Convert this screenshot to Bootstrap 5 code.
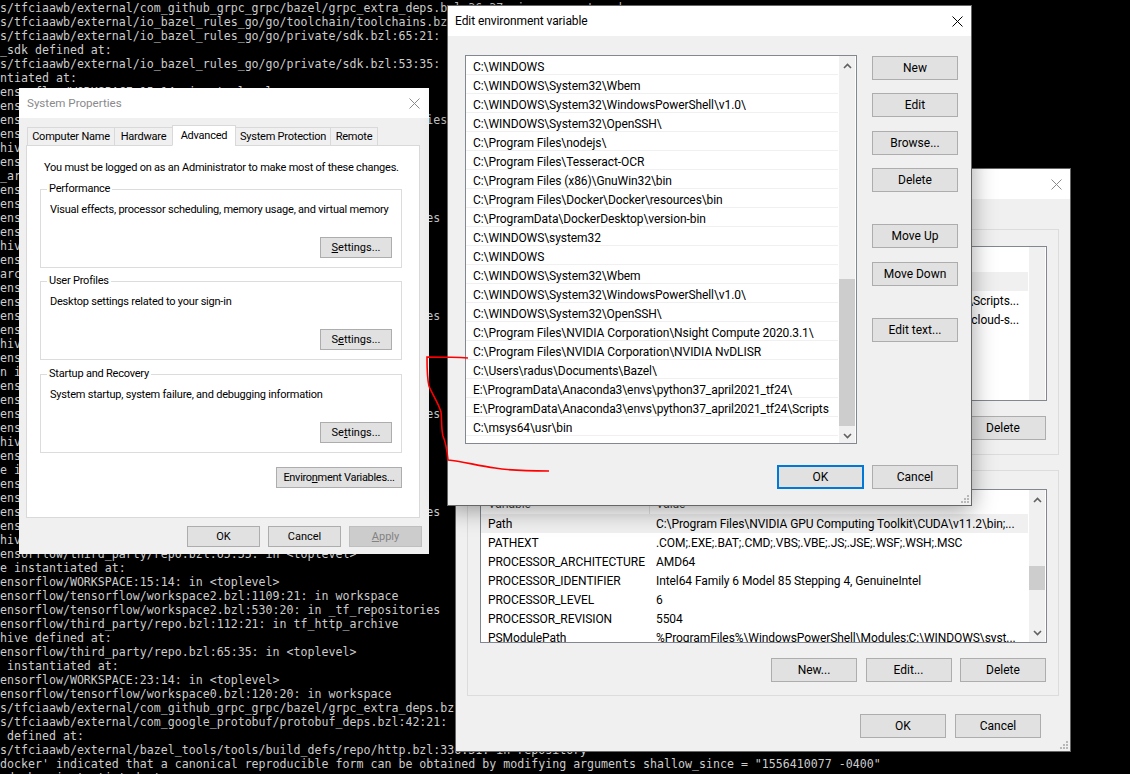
<!DOCTYPE html>
<html lang="en">
<head>
<meta charset="utf-8">
<title>Environment variables</title>
<link href="https://cdn.jsdelivr.net/npm/bootstrap@5.3.0/dist/css/bootstrap.min.css" rel="stylesheet">
<style>
html,body{margin:0;background:#000;overflow:hidden}
.desk{position:relative;width:1130px;height:774px;overflow:hidden;background:#000;font-family:Roboto,"Noto Sans",sans-serif;color:#000}
.term{margin:0;padding:1px 0 0;font:11.62px/14px "DejaVu Sans Mono",monospace;color:#ccc;white-space:pre;overflow:hidden;height:774px}
.win{position:absolute;background:#f0f0f0;display:flex;flex-direction:column}
.win-sys{left:19px;top:88px;width:410px;height:466px;font-size:11px;line-height:14px;letter-spacing:-.22px}
.win-path{left:447px;top:5px;width:525px;height:501px;border:1px solid #666;box-shadow:0 4px 22px rgba(0,0,0,.38);font-size:12px;line-height:14px;letter-spacing:-.08px;z-index:3}
.win-env{left:455px;top:168px;width:616px;height:584px;border:1px solid #666;font-size:12px;line-height:14px;letter-spacing:-.08px}
.ttl{height:30px;flex:none;background:#fff;display:flex;align-items:center;justify-content:space-between;padding:0 8px 0 7px}
.ttl-off{color:#8a8a8a;font-size:11.6px;letter-spacing:0}
.win-sys .ttl{padding:0 9px 0 8px}
.xico{display:block;width:11px;height:11px;fill:none;stroke:#000;stroke-width:1}
.ttl-off .xico{stroke:#8a8a8a}
.btn.wbtn{--bs-btn-padding-x:0;--bs-btn-padding-y:0;--bs-btn-font-size:inherit;--bs-btn-line-height:1;--bs-btn-border-radius:0;--bs-btn-border-width:1px;--bs-btn-bg:#e1e1e1;--bs-btn-border-color:#adadad;--bs-btn-color:#000;flex:none;display:flex;align-items:center;justify-content:center;width:86px;height:24px;background:#e1e1e1;border:1px solid #adadad;color:#000;white-space:nowrap}
.win-sys .btn.wbtn{width:73px;height:21px}
.win-sys .gact .btn.wbtn{width:72px}
.win-sys .btn.wide{width:126px;letter-spacing:-.3px}
.btn.wbtn.off{background:#ccc;border-color:#bfbfbf;color:#838383;opacity:1}
.btn.wbtn.okb{border:2px solid #0078d7;width:87px}
.tabrow{margin:7px 0 0 8px;align-items:flex-end;border:0;height:21px;flex:none;position:relative;z-index:1;flex-wrap:nowrap}
.tabrow .nav-link{display:flex;align-items:center;justify-content:center;padding:1px 0 0;height:19px;margin:0 0 0 -1px;border:1px solid #d9d9d9;border-radius:0;background:#f0f0f0;color:#000;white-space:nowrap}
.tabrow .nav-link.active{height:21px;padding:0;background:#fff;border-color:#d9d9d9 #d9d9d9 #fff;color:#000}
.t1{width:88px;margin-left:0!important}.t2{width:59px}.t3{width:64px}.t4{width:96px}.t5{width:48px}
.tabpane{margin:-1px 9px 0 7px;height:373px;flex:none;background:#fff;border:1px solid #d9d9d9;padding:15px 17px 0 13px}
.note{margin:0 0 0 4px;height:14px;white-space:nowrap}
.gbox{display:block;min-width:0;margin:7px 0 0;padding:0;border:1px solid #dcdcdc;height:86px}
.gbox.g2{margin-top:6px}
.gbox.g3{margin-top:7px}
.gbox legend{float:none;width:auto;margin:0 0 0 6px;padding:0 2px;font-size:inherit;line-height:14px}
.ginner{padding:7px 9px 0 9px}
.gline{height:14px;white-space:nowrap}
.gact{display:flex;justify-content:flex-end;margin-top:20px}
.envact{display:flex;justify-content:flex-end;margin-top:14px}
.sysfoot{display:flex;justify-content:flex-end;gap:8px;margin:8px 7px 0 0}
.pathmain{display:flex;margin:19px 0 0 17px;gap:15px}
.lbox{display:flex;background:#fff;border:1px solid #828790;overflow:hidden;flex:none}
.lbox-path{width:392px;height:389px}
.paths{flex:1;min-width:0;border-radius:0;margin:0}
.paths .list-group-item{height:19px;padding:3px 0 0 7px;display:flex;align-items:center;border:0;border-bottom:1px solid #f0f0f0;border-radius:0;background:#fff;color:#000;margin:0;white-space:nowrap}
.sbar{width:18px;flex:none;display:flex;flex-direction:column;background:#f0f0f0;margin:0;border:1px solid #fff;border-width:0 1px}
.sarrow{height:19px;flex:none;display:flex;align-items:center;justify-content:center}
.sarrow svg{display:block;width:9px;height:6px;fill:none;stroke:#606060;stroke-width:1.6}
.sgap{flex:none}
.sgrow{flex:1}
.sthumb{background:#cdcdcd;flex:none}
.p1{height:204px}.pth{height:147px}
.v1{height:57px}.vth{height:24px}
.btncol{display:flex;flex-direction:column;gap:32.5px;padding-top:1px;width:86px}
.btngrp{display:flex;flex-direction:column;gap:13.33px}
.pathfoot{display:flex;justify-content:flex-end;gap:8px;margin:21px 13px 0 0}
.grip{position:absolute;right:1px;bottom:1px;width:10px;height:10px;fill:#b8b8b8}
.egrp{margin:0 11px;padding:0;border:1px solid #dcdcdc;height:233px;min-width:0;display:block}
.egrp legend{float:none;width:auto;margin:0 0 0 8px;padding:0 2px;font-size:inherit;line-height:14px}
.egrp.e1{margin-top:23px}
.egrp.e2{margin-top:8px}
.egrp .lbox{margin:10px 11px 0 12px;height:155px}
.egrp.e2 .lbox{margin-top:12px;height:154px}
.vtable{flex:1;min-width:0;overflow:hidden}
.vrow{display:flex;height:19px;align-items:center;white-space:nowrap;padding-top:1px}
.vrow.sel{background:#f0f0f0}
.vhead{display:flex;height:24px;align-items:flex-end;white-space:nowrap;color:#444}
.vhead.hh{height:25px}
.vn{width:169px;flex:none;padding-left:7px;overflow:hidden}
.vv{flex:1;min-width:0;padding-left:6px;padding-right:9px;overflow:hidden}
.vhead .vn{border-right:1px solid #e5e5e5;height:100%;display:flex;align-items:flex-end;padding-bottom:3px}
.vhead .vv{display:flex;align-items:flex-end;padding-bottom:3px}
.endtxt{text-align:right}
.eact{display:flex;justify-content:flex-end;gap:8.5px;margin:15px 12px 0 0}
.envfoot{display:flex;justify-content:flex-end;gap:9px;margin:18px 29px 0 0}
.scrib{position:absolute;left:0;top:0;width:1130px;height:774px;z-index:5;pointer-events:none;fill:none;stroke:#f00;stroke-width:1.6}
</style>
</head>
<body>
<div class="desk">
<pre class="term">s/tfciaawb/external/com_github_grpc_grpc/bazel/grpc_extra_deps.bzl:36:37: in repo_extra_deps
s/tfciaawb/external/io_bazel_rules_go/go/toolchain/toolchains.bzl:89:5: in go_register_toolchains
s/tfciaawb/external/io_bazel_rules_go/go/private/sdk.bzl:65:21:
_sdk defined at:
s/tfciaawb/external/io_bazel_rules_go/go/private/sdk.bzl:53:35:
ntiated at:
ensorflow/WORKSPACE:15:14: in &lt;toplevel&gt;
ensorflow/tensorflow/workspace2.bzl:1109:21: in workspace
ensorflow/tensorflow/workspace2.bzl:1109:21: in _tf_repositories
ensorflow/third_party/repo.bzl:112:21: in tf_http_archive
hive defined at:
ensorflow/third_party/repo.bzl:65:35: in &lt;toplevel&gt;
_archive instantiated at:
ensorflow/WORKSPACE:15:14: in &lt;toplevel&gt;
ensorflow/tensorflow/workspace2.bzl:1109:21: in workspace
ensorflow/tensorflow/workspace2.bzl:530:20: in _tf_repositories
ensorflow/third_party/repo.bzl:112:21: in tf_http_archive
hive defined at:
ensorflow/third_party/repo.bzl:65:35: in &lt;toplevel&gt;
archive instantiated at:
ensorflow/WORKSPACE:15:14: in &lt;toplevel&gt;
ensorflow/tensorflow/workspace2.bzl:1109:21: in workspace
ensorflow/tensorflow/workspace2.bzl:530:20: in _tf_repositories
ensorflow/third_party/repo.bzl:112:21: in tf_http_archive
hive defined at:
ensorflow/third_party/repo.bzl:65:35: in &lt;toplevel&gt;
n instantiated at:
ensorflow/WORKSPACE:15:14: in &lt;toplevel&gt;
ensorflow/tensorflow/workspace2.bzl:1109:21: in workspace
ensorflow/tensorflow/workspace2.bzl:530:20: in _tf_repositories
ensorflow/third_party/repo.bzl:112:21: in tf_http_archive
hive defined at:
ensorflow/third_party/repo.bzl:65:35: in &lt;toplevel&gt;
e instantiated at:
ensorflow/WORKSPACE:15:14: in &lt;toplevel&gt;
ensorflow/tensorflow/workspace2.bzl:1109:21: in workspace
ensorflow/tensorflow/workspace2.bzl:530:20: in _tf_repositories
ensorflow/third_party/repo.bzl:112:21: in tf_http_archive
hive defined at:
ensorflow/third_party/repo.bzl:65:35: in &lt;toplevel&gt;
e instantiated at:
ensorflow/WORKSPACE:15:14: in &lt;toplevel&gt;
ensorflow/tensorflow/workspace2.bzl:1109:21: in workspace
ensorflow/tensorflow/workspace2.bzl:530:20: in _tf_repositories
ensorflow/third_party/repo.bzl:112:21: in tf_http_archive
hive defined at:
ensorflow/third_party/repo.bzl:65:35: in &lt;toplevel&gt;
 instantiated at:
ensorflow/WORKSPACE:23:14: in &lt;toplevel&gt;
ensorflow/tensorflow/workspace0.bzl:120:20: in workspace
s/tfciaawb/external/com_github_grpc_grpc/bazel/grpc_extra_deps.bzl:36:37: in grpc_extra_deps
s/tfciaawb/external/com_google_protobuf/protobuf_deps.bzl:42:21:
 defined at:
s/tfciaawb/external/bazel_tools/tools/build_defs/repo/http.bzl:336:31: in repository
docker' indicated that a canonical reproducible form can be obtained by modifying arguments shallow_since = "1556410077 -0400"
 docker instantiated at:</pre>

<section class="win win-sys">
  <div class="ttl ttl-off"><span>System Properties</span><svg class="xico" viewBox="0 0 11 11"><path d="M.5.5l10 10M10.5.5l-10 10"/></svg></div>
  <ul class="nav nav-tabs tabrow">
    <li class="nav-item"><a class="nav-link t1" href="#">Computer Name</a></li>
    <li class="nav-item"><a class="nav-link t2" href="#">Hardware</a></li>
    <li class="nav-item"><a class="nav-link t3 active" href="#">Advanced</a></li>
    <li class="nav-item"><a class="nav-link t4" href="#">System Protection</a></li>
    <li class="nav-item"><a class="nav-link t5" href="#">Remote</a></li>
  </ul>
  <div class="tabpane">
    <p class="note">You must be logged on as an Administrator to make most of these changes.</p>
    <fieldset class="gbox">
      <legend>Performance</legend>
      <div class="ginner">
        <div class="gline">Visual effects, processor scheduling, memory usage, and virtual memory</div>
        <div class="gact"><button type="button" class="btn wbtn"><span><u>S</u>ettings...</span></button></div>
      </div>
    </fieldset>
    <fieldset class="gbox g2">
      <legend>User Profiles</legend>
      <div class="ginner">
        <div class="gline">Desktop settings related to your sign-in</div>
        <div class="gact"><button type="button" class="btn wbtn"><span>S<u>e</u>ttings...</span></button></div>
      </div>
    </fieldset>
    <fieldset class="gbox g3">
      <legend>Startup and Recovery</legend>
      <div class="ginner">
        <div class="gline">System startup, system failure, and debugging information</div>
        <div class="gact"><button type="button" class="btn wbtn"><span>Se<u>t</u>tings...</span></button></div>
      </div>
    </fieldset>
    <div class="envact"><button type="button" class="btn wbtn wide"><span>Enviro<u>n</u>ment Variables...</span></button></div>
  </div>
  <div class="sysfoot">
    <button type="button" class="btn wbtn">OK</button>
    <button type="button" class="btn wbtn">Cancel</button>
    <button type="button" class="btn wbtn off"><span><u>A</u>pply</span></button>
  </div>
</section>

<section class="win win-env">
  <div class="ttl ttl-off"><span>Environment Variables</span><svg class="xico" viewBox="0 0 11 11"><path d="M.5.5l10 10M10.5.5l-10 10"/></svg></div>
  <fieldset class="egrp e1">
    <legend>User variables for radus</legend>
    <div class="lbox">
      <div class="vtable">
        <div class="vhead hh"><div class="vn">Variable</div><div class="vv">Value</div></div>
        <div class="vrow sel"><div class="vn">Path</div><div class="vv endtxt"></div></div>
        <div class="vrow"><div class="vn">PYTHONPATH</div><div class="vv endtxt">E:\ProgramData\Anaconda3\envs\Scripts...</div></div>
        <div class="vrow"><div class="vn">TEMP</div><div class="vv endtxt">C:\Users\radus\AppData\Local\Google\Cloud SDK\cloud-s...</div></div>
      </div>
      <div class="sbar"></div>
    </div>
    <div class="eact">
      <button type="button" class="btn wbtn">New...</button>
      <button type="button" class="btn wbtn">Edit...</button>
      <button type="button" class="btn wbtn">Delete</button>
    </div>
  </fieldset>
  <fieldset class="egrp e2">
    <legend>System variables</legend>
    <div class="lbox">
      <div class="vtable">
        <div class="vhead"><div class="vn">Variable</div><div class="vv">Value</div></div>
        <div class="vrow sel"><div class="vn">Path</div><div class="vv">C:\Program Files\NVIDIA GPU Computing Toolkit\CUDA\v11.2\bin;...</div></div>
        <div class="vrow"><div class="vn">PATHEXT</div><div class="vv">.COM;.EXE;.BAT;.CMD;.VBS;.VBE;.JS;.JSE;.WSF;.WSH;.MSC</div></div>
        <div class="vrow"><div class="vn">PROCESSOR_ARCHITECTURE</div><div class="vv">AMD64</div></div>
        <div class="vrow"><div class="vn">PROCESSOR_IDENTIFIER</div><div class="vv">Intel64 Family 6 Model 85 Stepping 4, GenuineIntel</div></div>
        <div class="vrow"><div class="vn">PROCESSOR_LEVEL</div><div class="vv">6</div></div>
        <div class="vrow"><div class="vn">PROCESSOR_REVISION</div><div class="vv">5504</div></div>
        <div class="vrow"><div class="vn">PSModulePath</div><div class="vv">%ProgramFiles%\WindowsPowerShell\Modules;C:\WINDOWS\syst...</div></div>
      </div>
      <div class="sbar">
        <div class="sarrow"><svg viewBox="0 0 9 6"><path d="M1 5l3.5-3.5L8 5"/></svg></div>
        <div class="sgap v1"></div>
        <div class="sthumb vth"></div>
        <div class="sgrow"></div>
        <div class="sarrow"><svg viewBox="0 0 9 6"><path d="M1 1l3.5 3.5L8 1"/></svg></div>
      </div>
    </div>
    <div class="eact">
      <button type="button" class="btn wbtn">New...</button>
      <button type="button" class="btn wbtn">Edit...</button>
      <button type="button" class="btn wbtn">Delete</button>
    </div>
  </fieldset>
  <div class="envfoot">
    <button type="button" class="btn wbtn">OK</button>
    <button type="button" class="btn wbtn">Cancel</button>
  </div>
  <svg class="grip" viewBox="0 0 10 10"><path d="M7 1h2v2H7zM4 4h2v2H4zM7 4h2v2H7zM1 7h2v2H1zM4 7h2v2H4zM7 7h2v2H7z"/></svg>
</section>

<section class="win win-path">
  <div class="ttl"><span>Edit environment variable</span><svg class="xico" viewBox="0 0 11 11"><path d="M.5.5l10 10M10.5.5l-10 10"/></svg></div>
  <div class="pathmain">
    <div class="lbox lbox-path">
      <ul class="list-group paths">
        <li class="list-group-item">C:\WINDOWS</li>
        <li class="list-group-item">C:\WINDOWS\System32\Wbem</li>
        <li class="list-group-item">C:\WINDOWS\System32\WindowsPowerShell\v1.0\</li>
        <li class="list-group-item">C:\WINDOWS\System32\OpenSSH\</li>
        <li class="list-group-item">C:\Program Files\nodejs\</li>
        <li class="list-group-item">C:\Program Files\Tesseract-OCR</li>
        <li class="list-group-item">C:\Program Files (x86)\GnuWin32\bin</li>
        <li class="list-group-item">C:\Program Files\Docker\Docker\resources\bin</li>
        <li class="list-group-item">C:\ProgramData\DockerDesktop\version-bin</li>
        <li class="list-group-item">C:\WINDOWS\system32</li>
        <li class="list-group-item">C:\WINDOWS</li>
        <li class="list-group-item">C:\WINDOWS\System32\Wbem</li>
        <li class="list-group-item">C:\WINDOWS\System32\WindowsPowerShell\v1.0\</li>
        <li class="list-group-item">C:\WINDOWS\System32\OpenSSH\</li>
        <li class="list-group-item">C:\Program Files\NVIDIA Corporation\Nsight Compute 2020.3.1\</li>
        <li class="list-group-item">C:\Program Files\NVIDIA Corporation\NVIDIA NvDLISR</li>
        <li class="list-group-item">C:\Users\radus\Documents\Bazel\</li>
        <li class="list-group-item">E:\ProgramData\Anaconda3\envs\python37_april2021_tf24\</li>
        <li class="list-group-item">E:\ProgramData\Anaconda3\envs\python37_april2021_tf24\Scripts</li>
        <li class="list-group-item">C:\msys64\usr\bin</li>
      </ul>
      <div class="sbar">
        <div class="sarrow"><svg viewBox="0 0 9 6"><path d="M1 5l3.5-3.5L8 5"/></svg></div>
        <div class="sgap p1"></div>
        <div class="sthumb pth"></div>
        <div class="sgrow"></div>
        <div class="sarrow"><svg viewBox="0 0 9 6"><path d="M1 1l3.5 3.5L8 1"/></svg></div>
      </div>
    </div>
    <div class="btncol">
      <div class="btngrp">
        <button type="button" class="btn wbtn">New</button>
        <button type="button" class="btn wbtn">Edit</button>
        <button type="button" class="btn wbtn">Browse...</button>
        <button type="button" class="btn wbtn">Delete</button>
      </div>
      <div class="btngrp">
        <button type="button" class="btn wbtn">Move Up</button>
        <button type="button" class="btn wbtn">Move Down</button>
      </div>
      <div class="btngrp">
        <button type="button" class="btn wbtn">Edit text...</button>
      </div>
    </div>
  </div>
  <div class="pathfoot">
    <button type="button" class="btn wbtn okb">OK</button>
    <button type="button" class="btn wbtn">Cancel</button>
  </div>
  <svg class="grip" viewBox="0 0 10 10"><path d="M7 1h2v2H7zM4 4h2v2H4zM7 4h2v2H7zM1 7h2v2H1zM4 7h2v2H4zM7 7h2v2H7z"/></svg>
</section>

<svg class="scrib" viewBox="0 0 1130 774"><path d="M468 358C455 357 440 357 427 357C427 368 427 378 429 386C432 394 438 402 441 412C442 420 441 428 443 436C446 443 447 450 448 460C462 461 478 466 495 468C512 471 530 471 549 471"/></svg>
</div>
<script src="https://cdn.jsdelivr.net/npm/bootstrap@5.3.0/dist/js/bootstrap.bundle.min.js"></script>
</body>
</html>
